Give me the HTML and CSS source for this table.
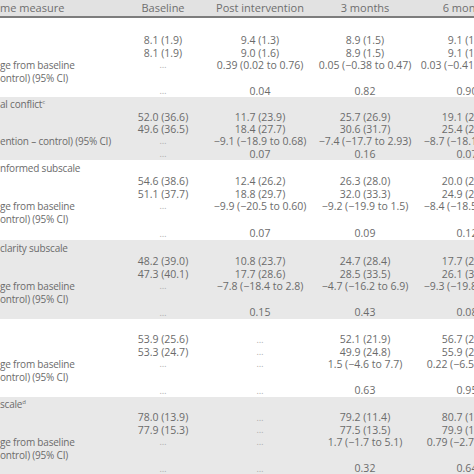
FILE: index.html
```html
<!DOCTYPE html>
<html>
<head>
<meta charset="utf-8">
<link rel="stylesheet" href="styles.css">
</head>
<body>
<div class="table">
  <div class="row head">
    <div class="lab">me measure</div>
    <div>Baseline</div>
    <div>Post intervention</div>
    <div>3 months</div>
    <div>6 months</div>
  </div>

  <div class="sec">
    <div class="row h14"><div class="lab"></div></div>
    <div class="row h13"><div class="lab"></div><div>8.1 (1.9)</div><div>9.4 (1.3)</div><div>8.9 (1.5)</div><div>9.1 (1.2)</div></div>
    <div class="row h12"><div class="lab"></div><div>8.1 (1.9)</div><div>9.0 (1.6)</div><div>8.9 (1.5)</div><div>9.1 (1.3)</div></div>
    <div class="row two"><div class="lab">ge from baseline<br>ontrol) (95% CI)</div><div class="dots">…</div><div>0.39 (0.02 to 0.76)</div><div>0.05 (−0.38 to 0.47)</div><div>0.03 (−0.41 to 0.47)</div></div>
    <div class="row p14"><div class="lab"></div><div class="dots">…</div><div>0.04</div><div>0.82</div><div>0.90</div></div>
  </div>

  <div class="sec gray">
    <div class="row h13"><div class="lab">al conflict<sup>c</sup></div></div>
    <div class="row h12"><div class="lab"></div><div>52.0 (36.6)</div><div>11.7 (23.9)</div><div>25.7 (26.9)</div><div>19.1 (24.1)</div></div>
    <div class="row h12"><div class="lab"></div><div>49.6 (36.5)</div><div>18.4 (27.7)</div><div>30.6 (31.7)</div><div>25.4 (29.2)</div></div>
    <div class="row h12"><div class="lab">ention – control) (95% CI)</div><div class="dots">…</div><div>−9.1 (−18.9 to 0.68)</div><div>−7.4 (−17.7 to 2.93)</div><div>−8.7 (−18.1 to 0.7)</div></div>
    <div class="row p14"><div class="lab"></div><div class="dots">…</div><div>0.07</div><div>0.16</div><div>0.07</div></div>
  </div>

  <div class="sec">
    <div class="row h14"><div class="lab">nformed subscale</div></div>
    <div class="row h13"><div class="lab"></div><div>54.6 (38.6)</div><div>12.4 (26.2)</div><div>26.3 (28.0)</div><div>20.0 (28.1)</div></div>
    <div class="row h12"><div class="lab"></div><div>51.1 (37.7)</div><div>18.8 (29.7)</div><div>32.0 (33.3)</div><div>24.9 (29.8)</div></div>
    <div class="row two"><div class="lab">ge from baseline<br>ontrol) (95% CI)</div><div class="dots">…</div><div>−9.9 (−20.5 to 0.60)</div><div>−9.2 (−19.9 to 1.5)</div><div>−8.4 (−18.5 to 1.7)</div></div>
    <div class="row p16"><div class="lab"></div><div class="dots">…</div><div>0.07</div><div>0.09</div><div>0.12</div></div>
  </div>

  <div class="sec gray">
    <div class="row h14"><div class="lab">clarity subscale</div></div>
    <div class="row h13"><div class="lab"></div><div>48.2 (39.0)</div><div>10.8 (23.7)</div><div>24.7 (28.4)</div><div>17.7 (25.0)</div></div>
    <div class="row h12"><div class="lab"></div><div>47.3 (40.1)</div><div>17.7 (28.6)</div><div>28.5 (33.5)</div><div>26.1 (32.4)</div></div>
    <div class="row two"><div class="lab">ge from baseline<br>ontrol) (95% CI)</div><div class="dots">…</div><div>−7.8 (−18.4 to 2.8)</div><div>−4.7 (−16.2 to 6.9)</div><div>−9.3 (−19.8 to 1.2)</div></div>
    <div class="row p15"><div class="lab"></div><div class="dots">…</div><div>0.15</div><div>0.43</div><div>0.08</div></div>
  </div>

  <div class="sec">
    <div class="row h13"><div class="lab"></div></div>
    <div class="row h13"><div class="lab"></div><div>53.9 (25.6)</div><div class="dots">…</div><div>52.1 (21.9)</div><div>56.7 (22.0)</div></div>
    <div class="row h12"><div class="lab"></div><div>53.3 (24.7)</div><div class="dots">…</div><div>49.9 (24.8)</div><div>55.9 (23.1)</div></div>
    <div class="row two"><div class="lab">ge from baseline<br>ontrol) (95% CI)</div><div class="dots">…</div><div class="dots">…</div><div>1.5 (−4.6 to 7.7)</div><div>0.22 (−6.5 to 6.9)</div></div>
    <div class="row p15"><div class="lab"></div><div class="dots">…</div><div class="dots">…</div><div>0.63</div><div>0.95</div></div>
  </div>

  <div class="sec gray">
    <div class="row h13"><div class="lab">scale<sup>d</sup></div></div>
    <div class="row h13"><div class="lab"></div><div>78.0 (13.9)</div><div class="dots">…</div><div>79.2 (11.4)</div><div>80.7 (12.1)</div></div>
    <div class="row h12"><div class="lab"></div><div>77.9 (15.3)</div><div class="dots">…</div><div>77.5 (13.5)</div><div>79.9 (13.2)</div></div>
    <div class="row two"><div class="lab">ge from baseline<br>ontrol) (95% CI)</div><div class="dots">…</div><div class="dots">…</div><div>1.7 (−1.7 to 5.1)</div><div>0.79 (−2.7 to 4.3)</div></div>
    <div class="row p15"><div class="lab"></div><div class="dots">…</div><div class="dots">…</div><div>0.32</div><div>0.64</div></div>
  </div>
</div>
</body>
</html>
```
FILE: styles.css
```css
html, body {
  margin: 0;
  padding: 0;
  background: #ffffff;
  overflow: hidden;
  width: 474px;
  height: 474px;
}
.table {
  font-family: "Open Sans", "Noto Sans", sans-serif;
  font-size: 10.5px;
  color: #6b6b6b;
  width: 520px;
}
.row {
  display: grid;
  grid-template-columns: 118px 90px 104px 106px 98px;
  white-space: nowrap;
}
.row > div {
  text-align: center;
  padding-top: 1px;
}
.sec .row > .lab {
  font-size: 10px;
  letter-spacing: -0.2px;
}
.row > .lab {
  text-align: left;
}
.head {
  height: 16px;
  line-height: 16px;
  font-size: 11px;
  background: #e2e2e2;
  border-bottom: 2px solid #7d7d7d;
  margin-bottom: 1px;
  color: #6e6e6e;
}
.head > div {
  padding-top: 0;
}
.sec.gray {
  background: #e8e8e8;
}
.h14 { height: 14px; line-height: 14px; }
.h13 { height: 13px; line-height: 13px; }
.h12 { height: 12px; line-height: 12px; }
.two { height: 25px; line-height: 12.5px; }
.p14 { height: 14px; line-height: 14px; }
.p15 { height: 15px; line-height: 15px; }
.p16 { height: 16px; line-height: 17px; }
.dots {
  color: #ababab;
  font-size: 9px;
}
sup {
  font-size: 6px;
  line-height: 0;
  vertical-align: 4px;
}
```
